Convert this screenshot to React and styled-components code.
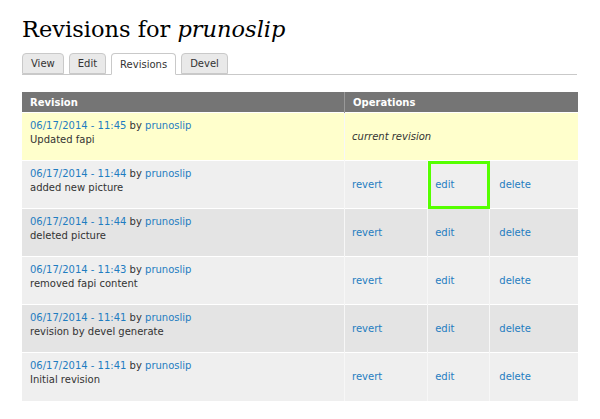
import React from 'react';
import styled, { createGlobalStyle } from 'styled-components';

const GlobalStyle = createGlobalStyle`
  html, body {
    margin: 0;
    padding: 0;
    background: #fff;
  }
  body {
    font-family: "DejaVu Sans", "Liberation Sans", sans-serif;
    color: #333;
  }
`;

const Page = styled.div`
  width: 600px;
  height: 419px;
  padding: 15px 23px 0 22px;
  box-sizing: border-box;
  overflow: hidden;
`;
const Title = styled.h1`
  margin: 0;
  font-family: "DejaVu Serif", "Liberation Serif", serif;
  font-weight: normal;
  font-size: 22.5px;
  line-height: 28px;
  color: #000;
  em {
    font-style: italic;
  }
`;
const Tabs = styled.ul`
  list-style: none;
  margin: 10px 0 0;
  padding: 0;
  display: flex;
  gap: 5px;
  border-bottom: 1px solid #c9c9c9;
  height: 21px;
`;
const Tab = styled.li`
  box-sizing: border-box;
  padding: 0 8px;
  display: flex;
  align-items: center;
  font-size: 10px;
  color: #333;
  background: ${({ $active }) => $active ? '#fff' : '#e9e9e9'};
  border: 1px solid #c9c9c9;
  border-bottom-color: ${({ $active }) => $active ? '#fff' : '#c9c9c9'};
  border-radius: 4px 4px 0 0;
  height: ${({ $active }) => $active ? '22px' : '21px'};
`;
const Table = styled.table`
  margin-top: 17px;
  width: 556px;
  border-collapse: collapse;
  font-size: 10px;
`;
const HeadCell = styled.th`
  background: #757575;
  color: #fff;
  font-weight: bold;
  text-align: left;
  height: 20px;
  padding: 0 8px;
  border-left: 1px solid #999;
  &:first-child {
    border-left: none;
  }
`;
const Row = styled.tr`
  background: ${({ $tone }) => $tone === 'current' ? '#ffffcc' : $tone === 'odd' ? '#efefef' : '#e4e4e4'};
  border-top: 1px solid #fff;
`;
const InfoCell = styled.td`
  height: 48px;
  box-sizing: border-box;
  vertical-align: top;
  padding: 6px 8px;
  line-height: 14px;
  width: 322px;
`;
const OpCell = styled.td`
  vertical-align: middle;
  padding: 0 ${({ $pad }) => $pad}px;
  border-left: 1px solid #f7f7f7;
  outline: ${({ $highlighted }) => $highlighted ? '3px solid #55ff00' : 'none'};
  outline-offset: -3px;
  width: ${({ $w }) => $w}px;
  box-sizing: border-box;
`;
const CurrentCell = styled.td`
  vertical-align: middle;
  padding: 0 7px;
  font-style: italic;
  border-left: 1px solid #f7f7f7;
`;
const Link = styled.a`
  color: #1f7dc1;
  text-decoration: none;
`;
const Line = styled.div``;

const REVISIONS = [
  { date: '06/17/2014 - 11:45', log: 'Updated fapi', current: true },
  { date: '06/17/2014 - 11:44', log: 'added new picture' },
  { date: '06/17/2014 - 11:44', log: 'deleted picture' },
  { date: '06/17/2014 - 11:43', log: 'removed fapi content' },
  { date: '06/17/2014 - 11:41', log: 'revision by devel generate' },
  { date: '06/17/2014 - 11:41', log: 'Initial revision' },
];

function App() {
  return (
    <Page>
      <GlobalStyle />
      <Title>Revisions for <em>prunoslip</em></Title>
      <Tabs>
        <Tab>View</Tab>
        <Tab>Edit</Tab>
        <Tab $active>Revisions</Tab>
        <Tab>Devel</Tab>
      </Tabs>
      <Table>
        <thead>
          <tr>
            <HeadCell>Revision</HeadCell>
            <HeadCell colSpan={3}>Operations</HeadCell>
          </tr>
        </thead>
        <tbody>
          {REVISIONS.map((rev, i) => (
            <Row key={i} $tone={rev.current ? 'current' : i % 2 === 1 ? 'odd' : 'even'}>
              <InfoCell>
                <Line>
                  <Link href="#">{rev.date}</Link> by <Link href="#">prunoslip</Link>
                </Line>
                <Line>{rev.log}</Line>
              </InfoCell>
              {rev.current ? (
                <CurrentCell colSpan={3}>current revision</CurrentCell>
              ) : (
                <>
                  <OpCell $w={83} $pad={7}><Link href="#">revert</Link></OpCell>
                  <OpCell $w={62} $pad={7} $highlighted={i === 1}><Link href="#">edit</Link></OpCell>
                  <OpCell $w={88} $pad={9}><Link href="#">delete</Link></OpCell>
                </>
              )}
            </Row>
          ))}
        </tbody>
      </Table>
    </Page>
  );
}

export default App;
